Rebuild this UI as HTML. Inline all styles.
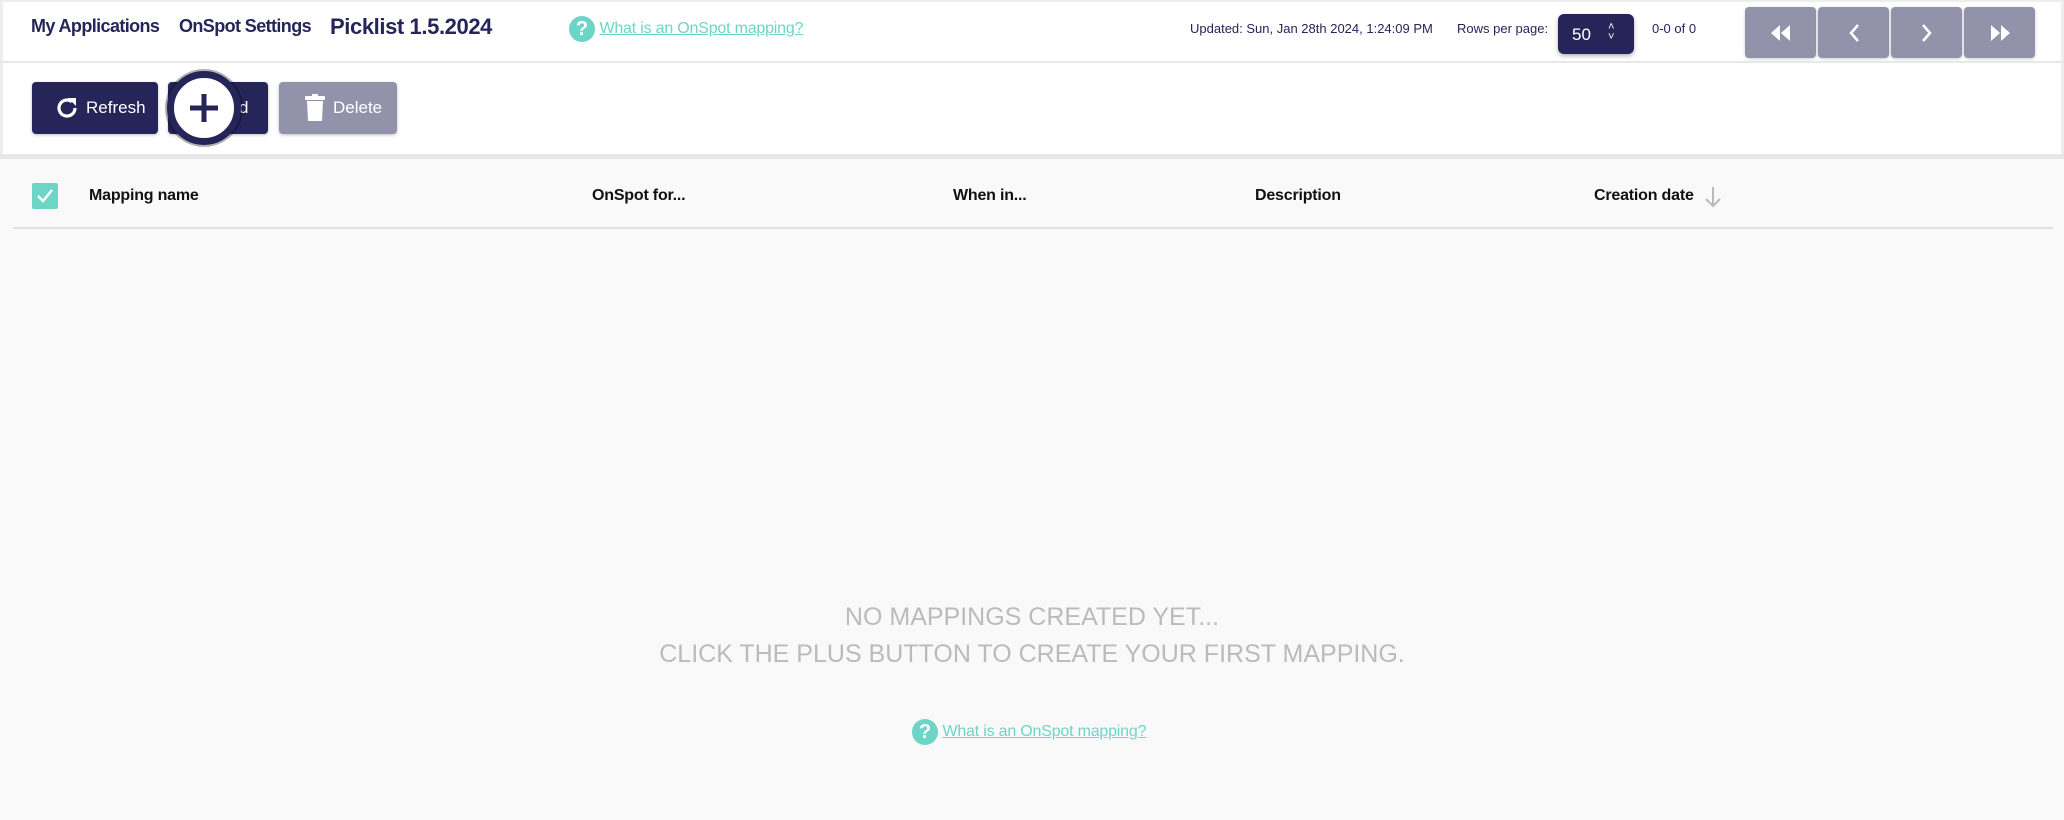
<!DOCTYPE html>
<html><head><meta charset="utf-8"><style>
*{margin:0;padding:0;box-sizing:border-box}
body{width:2064px;height:820px;overflow:hidden;background:#fff;font-family:"Liberation Sans",sans-serif;color:#25255a;position:relative}
.a{position:absolute;white-space:nowrap}
.nav{font-size:18px;font-weight:bold;top:16px;letter-spacing:-0.6px}
.btn{position:absolute;top:82px;height:52px;border-radius:4px;background:#25255a;color:#fff;font-size:17px;display:flex;align-items:center;box-shadow:0 1px 3px rgba(0,0,0,.25)}
.pg{position:absolute;top:7px;width:71px;height:51px;background:#9293ab;border-radius:4px;color:#fff;display:flex;align-items:center;justify-content:center;box-shadow:0 1px 3px rgba(0,0,0,.2)}
.th{position:absolute;top:187px;font-size:16px;font-weight:bold;color:#111;letter-spacing:-0.2px}
.q{display:inline-block;width:26px;height:26px;border-radius:50%;background:#6dd5c5;color:#fff;font-weight:bold;font-size:20px;text-align:center;line-height:26px;vertical-align:middle}
.lnk{color:#6dd5c5;text-decoration:underline;font-size:16px;letter-spacing:-0.2px}
</style></head><body>
<div class="a" style="left:0;top:0;width:2064px;height:2px;background:#eee"></div>
<div class="a" style="left:0;top:0;width:3px;height:820px;background:#eee"></div>
<div class="a" style="right:0;top:0;width:3px;height:820px;background:#eee"></div>
<div class="a nav" style="left:31px">My Applications</div>
<div class="a nav" style="left:179px">OnSpot Settings</div>
<div class="a" style="left:330px;top:14px;font-size:22px;font-weight:bold;letter-spacing:-0.4px">Picklist 1.5.2024</div>
<div class="a" style="left:569px;top:16px"><span class="q">?</span> <span class="lnk">What is an OnSpot mapping?</span></div>
<div class="a" style="left:1190px;top:21px;font-size:13px">Updated: Sun, Jan 28th 2024, 1:24:09 PM</div>
<div class="a" style="left:1457px;top:21px;font-size:13px">Rows per page:</div>
<div class="a" style="left:1558px;top:14px;width:76px;height:40px;background:#25255a;border-radius:6px;color:#fff;font-size:17px;padding:11px 0 0 14px;box-shadow:0 2px 4px rgba(0,0,0,.3)">50<span style="position:absolute;left:50px;top:8px;font-size:11px;line-height:10px">˄<br>˅</span></div>
<div class="a" style="left:1652px;top:21px;font-size:13px">0-0 of 0</div>
<div class="pg" style="left:1745px"><svg width="26" height="18" viewBox="0 0 26 18"><path d="M12 1L3 9l9 8zM22 1l-9 8 9 8z" fill="#fff"/></svg></div>
<div class="pg" style="left:1818px"><svg width="14" height="20" viewBox="0 0 14 20"><path d="M11 2L4 10l7 8" stroke="#fff" stroke-width="2.5" fill="none"/></svg></div>
<div class="pg" style="left:1891px"><svg width="14" height="20" viewBox="0 0 14 20"><path d="M3 2l7 8-7 8" stroke="#fff" stroke-width="2.5" fill="none"/></svg></div>
<div class="pg" style="left:1964px"><svg width="26" height="18" viewBox="0 0 26 18"><path d="M4 1l9 8-9 8zM14 1l9 8-9 8z" fill="#fff"/></svg></div>
<div class="a" style="left:0;top:61px;width:2064px;height:2px;background:#e8e8e8"></div>
<div class="btn" style="left:32px;width:126px;padding-left:22px"><svg width="26" height="26" viewBox="0 0 26 26"><path d="M21 13a8 8 0 1 1-3-6.2" stroke="#fff" stroke-width="3.2" fill="none"/><path d="M14 3h8v8z" fill="#fff"/></svg><span style="margin-left:6px">Refresh</span></div>
<div class="btn" style="left:168px;width:100px;padding-left:71px">d</div>
<div class="btn" style="left:279px;width:118px;background:#9293ab;padding-left:26px"><svg width="20" height="28" viewBox="0 0 20 28"><rect x="0" y="2" width="20" height="4" rx="1" fill="#fff"/><rect x="7" y="0" width="6" height="3" fill="#fff"/><path d="M2 7h16l-1 20H3z" fill="#fff"/></svg><span style="margin-left:8px">Delete</span></div>
<div class="a" style="left:167px;top:71px;width:74px;height:74px;border-radius:50%;background:#fff;border:7px solid #25255a;box-shadow:0 0 0 2px rgba(0,0,0,.3)"><svg width="60" height="60" viewBox="0 0 60 60" style="position:absolute;left:0;top:0"><path d="M30 16v28M16 30h28" stroke="#25255a" stroke-width="5"/></svg></div>
<div class="a" style="left:0;top:154px;width:2064px;height:666px;background:#f9f9f9;border-top:5px solid #e8e8e8"></div>
<div class="a" style="left:32px;top:183px;width:26px;height:26px;background:#6dd5c5;border-radius:2px"><svg width="26" height="26" viewBox="0 0 26 26"><path d="M6 13l5 5 9-11" stroke="#fff" stroke-width="2.5" fill="none"/></svg></div>
<div class="th" style="left:89px">Mapping name</div>
<div class="th" style="left:592px">OnSpot for...</div>
<div class="th" style="left:953px">When in...</div>
<div class="th" style="left:1255px">Description</div>
<div class="th" style="left:1594px">Creation date</div>
<svg class="a" style="left:1703px;top:185px" width="20" height="24" viewBox="0 0 20 24"><path d="M10 2v19M3 14l7 7 7-7" stroke="#bbb" stroke-width="2" fill="none"/></svg>
<div class="a" style="left:13px;top:227px;width:2040px;height:2px;background:#e2e2e2"></div>
<div class="a" style="left:0;width:2064px;top:599px;text-align:center;font-size:25px;line-height:37px;color:#bbb">NO MAPPINGS CREATED YET...<br>CLICK THE PLUS BUTTON TO CREATE YOUR FIRST MAPPING.</div>
<div class="a" style="left:912px;top:719px"><span class="q">?</span> <span class="lnk">What is an OnSpot mapping?</span></div>
</body></html>
